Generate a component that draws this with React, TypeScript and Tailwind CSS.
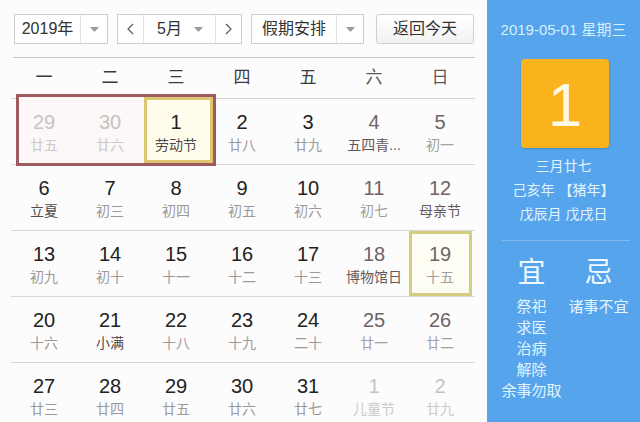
import React from "react";

type Cell = {
  day: string;
  lunar: string;
  kind?: "out" | "weekend" | "normal";
  fest?: boolean;
};

const font = {
  fontFamily: '"Liberation Sans", Arial, "Noto Sans CJK SC", sans-serif',
};

const weeks: Cell[][] = [
  [
    { day: "29", lunar: "廿五", kind: "out" },
    { day: "30", lunar: "廿六", kind: "out" },
    { day: "1", lunar: "劳动节", fest: true },
    { day: "2", lunar: "廿八" },
    { day: "3", lunar: "廿九" },
    { day: "4", lunar: "五四青...", kind: "weekend", fest: true },
    { day: "5", lunar: "初一", kind: "weekend" },
  ],
  [
    { day: "6", lunar: "立夏", fest: true },
    { day: "7", lunar: "初三" },
    { day: "8", lunar: "初四" },
    { day: "9", lunar: "初五" },
    { day: "10", lunar: "初六" },
    { day: "11", lunar: "初七", kind: "weekend" },
    { day: "12", lunar: "母亲节", kind: "weekend", fest: true },
  ],
  [
    { day: "13", lunar: "初九" },
    { day: "14", lunar: "初十" },
    { day: "15", lunar: "十一" },
    { day: "16", lunar: "十二" },
    { day: "17", lunar: "十三" },
    { day: "18", lunar: "博物馆日", kind: "weekend", fest: true },
    { day: "19", lunar: "十五", kind: "weekend" },
  ],
  [
    { day: "20", lunar: "十六" },
    { day: "21", lunar: "小满", fest: true },
    { day: "22", lunar: "十八" },
    { day: "23", lunar: "十九" },
    { day: "24", lunar: "二十" },
    { day: "25", lunar: "廿一", kind: "weekend" },
    { day: "26", lunar: "廿二", kind: "weekend" },
  ],
  [
    { day: "27", lunar: "廿三" },
    { day: "28", lunar: "廿四" },
    { day: "29", lunar: "廿五" },
    { day: "30", lunar: "廿六" },
    { day: "31", lunar: "廿七" },
    { day: "1", lunar: "儿童节", kind: "out" },
    { day: "2", lunar: "廿九", kind: "out" },
  ],
];

function Caret() {
  return (
    <svg width="9" height="5" viewBox="0 0 9 5">
      <path d="M0 0h9L4.5 5z" fill="#9a9a9a" />
    </svg>
  );
}

function Chevron({ right }: { right?: boolean }) {
  return (
    <svg width="7" height="12" viewBox="0 0 7 12">
      <path
        d={right ? "M1 1l5 5-5 5" : "M6 1L1 6l5 5"}
        fill="none"
        stroke="#5a5a5a"
        strokeWidth="1.2"
      />
    </svg>
  );
}

function DayCell({ c }: { c: Cell }) {
  let num = "text-[#222]";
  let lun = "text-[#9a9a9a]";
  if (c.kind === "out") {
    num = "text-[#c4c4c4]";
    lun = "text-[#cacaca]";
  } else if (c.kind === "weekend") {
    num = "text-[#6d6466]";
    lun = c.fest ? "text-[#65595b]" : "text-[#a0a0a0]";
  } else if (c.fest) {
    lun = "text-[#4e4e4e]";
  }
  return (
    <div className="relative z-10 flex flex-col items-center pt-[11px]">
      <div className={`text-[20px] leading-[24px] ${num}`}>{c.day}</div>
      <div className={`mt-px text-[14px] leading-[20px] whitespace-nowrap ${lun}`}>
        {c.lunar}
      </div>
    </div>
  );
}

export default function App() {
  return (
    <div
      className="flex w-[640px] h-[422px] overflow-hidden bg-[#fdfcfc]"
      style={font}
    >
      {/* calendar side */}
      <div className="w-[487px] h-full">
        <div className="flex items-center h-[30px] mt-[14px] ml-[14px] text-[16px] text-[#333]">
          <div className="flex h-full w-[94px] border border-[#cdcdcd] bg-white">
            <div className="w-[66px] flex items-center justify-center border-r border-[#e2e2e2]">
              2019年
            </div>
            <div className="flex-1 flex items-center justify-center">
              <Caret />
            </div>
          </div>
          <div className="flex h-full w-[125px] ml-[9px] border border-[#cdcdcd] bg-white">
            <div className="w-[26px] flex items-center justify-center border-r border-[#e2e2e2]">
              <Chevron />
            </div>
            <div className="w-[72px] flex items-center border-r border-[#e2e2e2]">
              <span className="ml-[13px]">5月</span>
              <span className="ml-[12px] flex">
                <Caret />
              </span>
            </div>
            <div className="flex-1 flex items-center justify-center">
              <Chevron right />
            </div>
          </div>
          <div className="flex h-full w-[113px] ml-[9px] border border-[#cdcdcd] bg-white">
            <div className="w-[85px] flex items-center justify-center border-r border-[#e2e2e2]">
              假期安排
            </div>
            <div className="flex-1 flex items-center justify-center">
              <Caret />
            </div>
          </div>
          <div className="flex h-full w-[98px] ml-[12px] items-center justify-center rounded-[3px] border border-[#d0d0d0] bg-gradient-to-b from-white to-[#f1f1f1]">
            返回今天
          </div>
        </div>

        <div className="h-px bg-[#c6c6c6] ml-[13px] w-[462px] mt-[13px]" />

        <div className="ml-[11px] w-[464px]">
          <div className="grid grid-cols-[repeat(7,66px)] h-[41px] border-b border-[#d2d2d2] text-[17px] text-[#3a3a3a] items-center">
            {["一", "二", "三", "四", "五", "六", "日"].map((w, i) => (
              <div
                key={w}
                className={`text-center ${i >= 5 ? "text-[#5a5a5a]" : ""}`}
              >
                {w}
              </div>
            ))}
          </div>

          {weeks.map((row, ri) => (
            <div
              key={ri}
              className="relative grid grid-cols-[repeat(7,66px)] h-[66px] border-b border-[#d6d6d6]"
            >
              {ri === 0 && (
                <>
                  <div className="absolute left-[5px] top-[-5px] w-[200px] h-[72px] border-[3px] border-[#9d5a5f] bg-[#fdf7f7] z-0" />
                  <div className="absolute left-[133px] top-[-2px] w-[69px] h-[66px] border-[3px] border-[#dcc66f] bg-[#fffcec] z-0" />
                </>
              )}
              {ri === 2 && (
                <div className="absolute left-[398px] top-0 w-[63px] h-[65px] border-[3px] border-[#d6ce7f] bg-[#fffef4] z-0" />
              )}
              {row.map((c, ci) => (
                <DayCell key={ci} c={c} />
              ))}
            </div>
          ))}
        </div>
      </div>

      {/* day detail side */}
      <div className="flex-1 h-full bg-[#56a4eb] flex flex-col text-[#e4f4ff]">
        <div className="pt-[20px] text-center text-[15px] leading-[20px] text-[#d6f0ff] whitespace-nowrap">
          2019-05-01 星期三
        </div>
        <div className="mt-[19px] ml-[34px] w-[88px] h-[89px] rounded-[4px] bg-[#fab21d] shadow-[0_1px_2px_rgba(0,0,0,0.15)] flex items-center justify-center pt-[3px] text-[62px] leading-none text-[#fff8e6]">
          1
        </div>
        <div className="mt-[6px] text-center text-[14px] leading-[24px]">
          <div>三月廿七</div>
          <div>己亥年 【猪年】</div>
          <div>戊辰月 戊戌日</div>
        </div>
        <div className="mt-[14px] ml-[15px] w-[128px] h-px bg-[#80bbf0]" />
        <div className="flex pl-[11px] mt-[15px]">
          <div className="w-[67px] flex flex-col items-center">
            <div className="text-[28px] leading-[34px] text-[#eef8ff]">宜</div>
            <div className="mt-[6px] text-[15px] leading-[21px] text-center whitespace-nowrap">
              <div>祭祀</div>
              <div>求医</div>
              <div>治病</div>
              <div>解除</div>
              <div>余事勿取</div>
            </div>
          </div>
          <div className="w-[67px] flex flex-col items-center">
            <div className="text-[28px] leading-[34px] text-[#eef8ff]">忌</div>
            <div className="mt-[6px] text-[15px] leading-[21px] text-center whitespace-nowrap">
              <div>诸事不宜</div>
            </div>
          </div>
        </div>
      </div>
    </div>
  );
}
